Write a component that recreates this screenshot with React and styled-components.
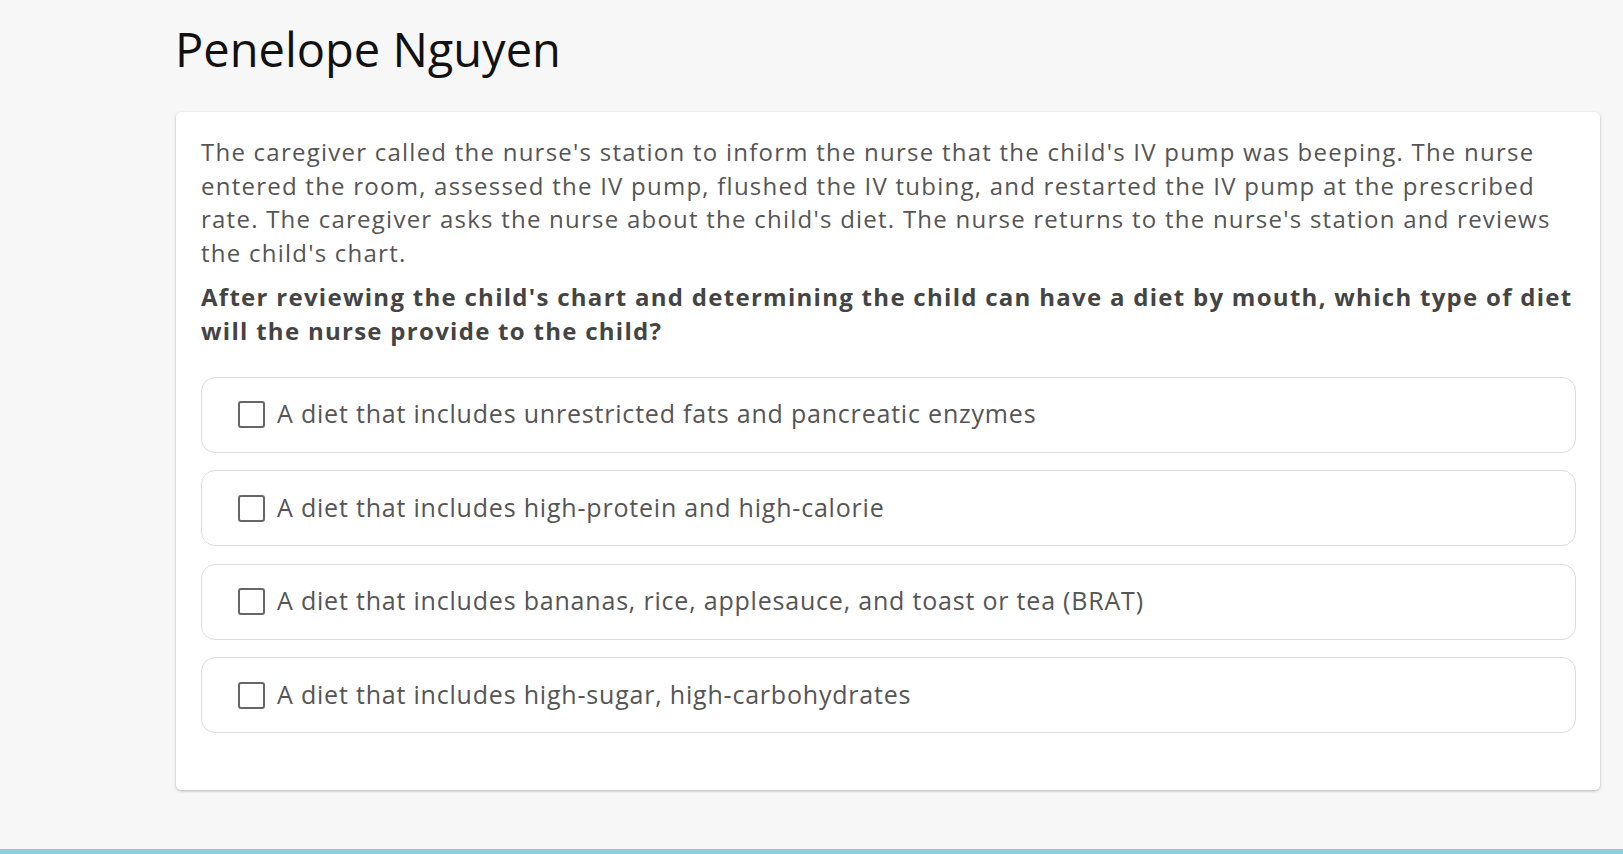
import React from "react";
import styled, { createGlobalStyle } from "styled-components";

const GlobalStyle = createGlobalStyle`
  html, body {
    margin: 0;
    padding: 0;
    background: #f7f7f7;
    font-family: "Open Sans", "Noto Sans", sans-serif;
  }
  * { box-sizing: border-box; }
`;

const Page = styled.div`
  min-height: 100vh;
  display: flex;
  flex-direction: column;
`;

const Main = styled.main`
  flex: 1;
  padding: 17px 23px 0 176px;
`;

const Title = styled.h1`
  margin: 0 0 31px 0;
  font-size: 47px;
  font-weight: 400;
  line-height: 1.362;
  color: #111;
  margin-left: -1px;
`;

const Card = styled.section`
  background: #fff;
  border-radius: 5px;
  box-shadow: 0 1px 3px rgba(0, 0, 0, 0.28);
  padding: 23px 24px 57px 25px;
`;

const Stem = styled.p`
  margin: 0;
  font-size: 24px;
  line-height: 1.4;
  color: #555;
  letter-spacing: 1.24px;
`;

const Question = styled.p`
  margin: 11px 0 29px 0;
  font-size: 24px;
  line-height: 1.4;
  font-weight: 700;
  color: #444;
  letter-spacing: 1.28px;
`;

const Options = styled.div`
  display: flex;
  flex-direction: column;
  gap: 17.5px;
`;

const Option = styled.label`
  display: flex;
  align-items: center;
  gap: 12px;
  height: 76px;
  padding: 0 36px 3px;
  border: 1.5px solid #ddd;
  border-radius: 14px;
  background: #fff;
  cursor: pointer;
  font-size: 25px;
  color: #555;
  letter-spacing: 0.8px;
`;

const Box = styled.span`
  flex: none;
  width: 27px;
  height: 27px;
  margin-top: 3px;
  border: 2.5px solid #666;
  border-radius: 3px;
  background: #fff;
`;

const Footer = styled.div`
  height: 5px;
  background: #8fcfdc;
`;

const choices = [
  "A diet that includes unrestricted fats and pancreatic enzymes",
  "A diet that includes high-protein and high-calorie",
  "A diet that includes bananas, rice, applesauce, and toast or tea (BRAT)",
  "A diet that includes high-sugar, high-carbohydrates",
];

const App = () => {
  return (
    <Page>
      <GlobalStyle />
      <Main>
        <Title>Penelope Nguyen</Title>
        <Card>
          <Stem>
            The caregiver called the nurse's station to inform the nurse that the child's IV pump was beeping. The nurse
            entered the room, assessed the IV pump, flushed the IV tubing, and restarted the IV pump at the prescribed
            rate. The caregiver asks the nurse about the child's diet. The nurse returns to the nurse's station and reviews
            the child's chart.
          </Stem>
          <Question>
            After reviewing the child's chart and determining the child can have a diet by mouth, which type of diet
            will the nurse provide to the child?
          </Question>
          <Options>
            {choices.map((c) => (
              <Option key={c}>
                <Box />
                {c}
              </Option>
            ))}
          </Options>
        </Card>
      </Main>
      <Footer />
    </Page>
  );
};

export default App;
